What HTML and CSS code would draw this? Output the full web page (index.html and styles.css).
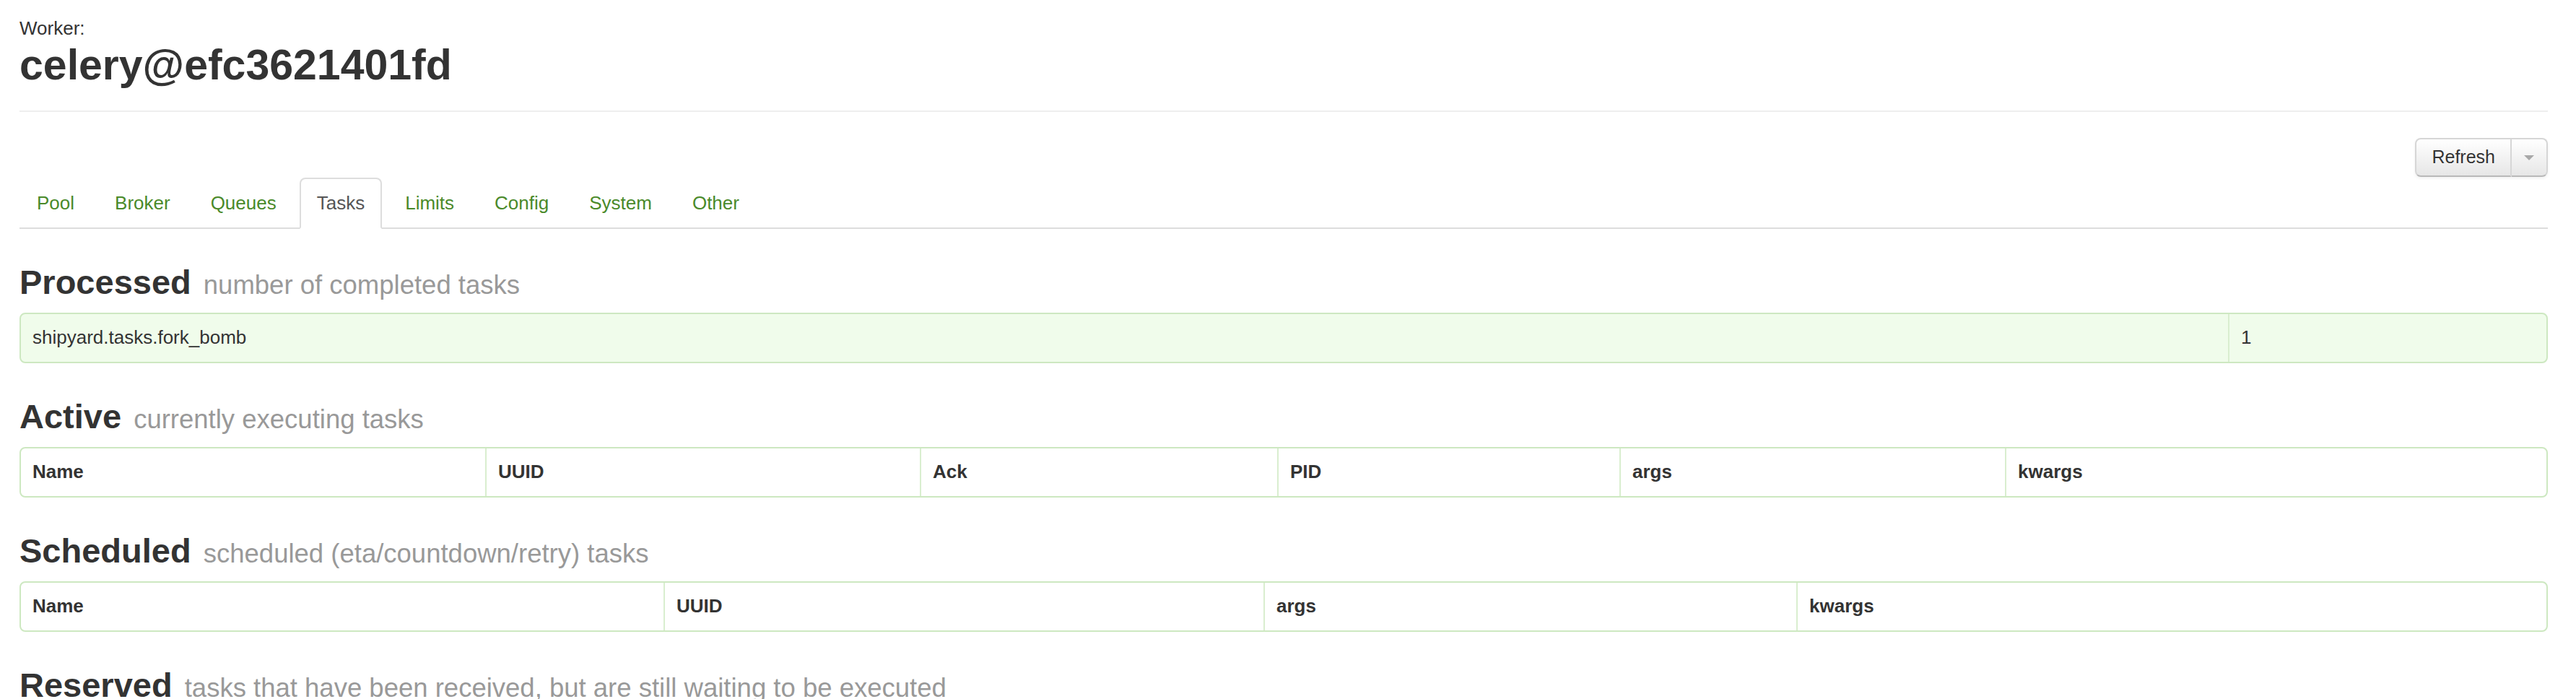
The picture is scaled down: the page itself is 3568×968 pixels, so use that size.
FILE: index.html
```html
<!DOCTYPE html>
<html lang="en">
<head>
<meta charset="utf-8">
<title>Worker celery@efc3621401fd</title>
<link rel="stylesheet" href="styles.css">
</head>
<body>
<div class="page">
  <div class="worker-label">Worker:</div>
  <h2 class="worker-name">celery@efc3621401fd</h2>
  <hr class="divider">

  <div class="toolbar">
    <div class="btn-group">
      <button class="btn btn-main" type="button">Refresh</button>
      <button class="btn btn-caret" type="button"><span class="caret"></span></button>
    </div>
  </div>

  <ul class="tabs">
    <li class="tab"><a href="#pool">Pool</a></li>
    <li class="tab"><a href="#broker">Broker</a></li>
    <li class="tab"><a href="#queues">Queues</a></li>
    <li class="tab active"><a href="#tasks">Tasks</a></li>
    <li class="tab"><a href="#limits">Limits</a></li>
    <li class="tab"><a href="#config">Config</a></li>
    <li class="tab"><a href="#system">System</a></li>
    <li class="tab"><a href="#other">Other</a></li>
  </ul>

  <h3 class="section-title">Processed <small>number of completed tasks</small></h3>
  <table class="grid grid-success">
    <colgroup><col class="w-proc-name"><col></colgroup>
    <tbody>
      <tr><td>shipyard.tasks.fork_bomb</td><td>1</td></tr>
    </tbody>
  </table>

  <h3 class="section-title">Active <small>currently executing tasks</small></h3>
  <table class="grid">
    <colgroup>
      <col class="w-act-name"><col class="w-act-uuid"><col class="w-act-ack"><col class="w-act-pid"><col class="w-act-args"><col>
    </colgroup>
    <thead>
      <tr><th>Name</th><th>UUID</th><th>Ack</th><th>PID</th><th>args</th><th>kwargs</th></tr>
    </thead>
    <tbody></tbody>
  </table>

  <h3 class="section-title">Scheduled <small>scheduled (eta/countdown/retry) tasks</small></h3>
  <table class="grid">
    <colgroup>
      <col class="w-sch-name"><col class="w-sch-uuid"><col class="w-sch-args"><col>
    </colgroup>
    <thead>
      <tr><th>Name</th><th>UUID</th><th>args</th><th>kwargs</th></tr>
    </thead>
    <tbody></tbody>
  </table>

  <h3 class="section-title">Reserved <small>tasks that have been received, but are still waiting to be executed</small></h3>
  <table class="grid">
    <colgroup>
      <col class="w-sch-name"><col class="w-sch-uuid"><col class="w-sch-args"><col>
    </colgroup>
    <thead>
      <tr><th>Name</th><th>UUID</th><th>args</th><th>kwargs</th></tr>
    </thead>
    <tbody></tbody>
  </table>
</div>
</body>
</html>
```
FILE: styles.css
```css
html, body {
  margin: 0;
  padding: 0;
  background: #fff;
  overflow: hidden;
}

body {
  font-family: "Liberation Sans", Arial, Helvetica, sans-serif;
  font-size: 26px;
  line-height: 36px;
  color: #333;
}

.page {
  padding: 21px 39px 0 27px;
}

.worker-label {
  font-size: 26px;
  line-height: 36px;
}

.worker-name {
  margin: 0;
  font-size: 59px;
  line-height: 66px;
  font-weight: bold;
  color: #333;
}

.divider {
  margin: 30px 0 0;
  height: 0;
  border: 0;
  border-top: 2px solid #eee;
}

/* Refresh split button */
.toolbar {
  display: flex;
  justify-content: flex-end;
  margin-top: 36px;
}

.btn-group {
  display: flex;
  border-radius: 8px;
  box-shadow: 0 2px 4px rgba(0, 0, 0, 0.06);
}

.btn {
  margin: 0;
  font-family: inherit;
  font-size: 25px;
  line-height: 36px;
  color: #333;
  text-shadow: 0 1px 1px rgba(255, 255, 255, 0.75);
  background: linear-gradient(#ffffff, #e6e6e6);
  border: 2px solid #d6d6d6;
  border-bottom-color: #b9b9b9;
  box-shadow: inset 0 2px 0 rgba(255, 255, 255, 0.3);
  cursor: pointer;
}

.btn-main {
  padding: 6px 21px 8px;
  border-radius: 8px 0 0 8px;
}

.btn-caret {
  display: flex;
  align-items: center;
  padding: 0 17px;
  border-left: 0;
  border-radius: 0 8px 8px 0;
}

.caret {
  width: 0;
  height: 0;
  border-left: 7.5px solid transparent;
  border-right: 7.5px solid transparent;
  border-top: 7.5px solid #a8a8a8;
}

/* Tabs */
.tabs {
  display: flex;
  list-style: none;
  margin: 1px 0 0;
  padding: 0;
  border-bottom: 2px solid #ddd;
}

.tab {
  margin: 0 8px -2px 0;
}

.tab a {
  display: block;
  padding: 15px 22px 16px;
  line-height: 36px;
  color: #4a8a2a;
  text-decoration: none;
  border: 2px solid transparent;
  border-radius: 8px 8px 0 0;
}

.tab.active a {
  color: #555;
  background: #fff;
  border-color: #ddd;
  border-bottom-color: transparent;
}

/* Sections */
.section-title {
  margin: 48px 0 16px;
  font-size: 47px;
  line-height: 52px;
  font-weight: bold;
  color: #333;
}

.section-title small {
  margin-left: 4px;
  font-size: 36.5px;
  line-height: 1;
  font-weight: normal;
  color: #999;
}

/* Tables */
.grid {
  width: 100%;
  table-layout: fixed;
  border-collapse: separate;
  border-spacing: 0;
  border: 2px solid #cde8c1;
  border-radius: 8px;
}

.grid-success {
  background: #f0fceb;
}

.grid th,
.grid td {
  padding: 14px 16px 16px;
  line-height: 36px;
  text-align: left;
  vertical-align: top;
  border-left: 2px solid #d9eecf;
}

.grid th:first-child,
.grid td:first-child {
  border-left: 0;
}

.grid th {
  font-weight: bold;
}

.w-proc-name { width: 3057px; }

.w-act-name { width: 643px; }
.w-act-uuid { width: 602px; }
.w-act-ack  { width: 495px; }
.w-act-pid  { width: 474px; }
.w-act-args { width: 534px; }

.w-sch-name { width: 890px; }
.w-sch-uuid { width: 831px; }
.w-sch-args { width: 738px; }
```
